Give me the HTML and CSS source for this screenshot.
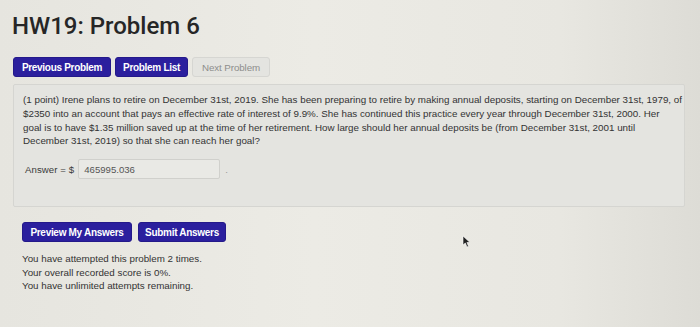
FILE: index.html
```html
<!DOCTYPE html>
<html>
<head>
<meta charset="utf-8">
<link rel="stylesheet" href="styles.css">
</head>
<body>
<div class="page">
  <h1 class="title">HW19: Problem 6</h1>
  <div class="nav">
    <span class="btn">Previous Problem</span>
    <span class="btn">Problem List</span>
    <span class="btn disabled">Next Problem</span>
  </div>
  <div class="problem">
    <p class="text">(1 point) Irene plans to retire on December 31st, 2019. She has been preparing to retire by making annual deposits, starting on December 31st, 1979, of<br>$2350 into an account that pays an effective rate of interest of 9.9%. She has continued this practice every year through December 31st, 2000. Her<br>goal is to have $1.35 million saved up at the time of her retirement. How large should her annual deposits be (from December 31st, 2001 until<br>December 31st, 2019) so that she can reach her goal?</p>
    <div class="answer">
      <span class="label">Answer = $</span>
      <span class="input">465995.036</span>
      <span class="dot">.</span>
    </div>
  </div>
  <div class="submit">
    <div class="actions">
      <span class="btn">Preview My Answers</span>
      <span class="btn">Submit Answers</span>
    </div>
    <div class="status">
      <div>You have attempted this problem 2 times.</div>
      <div>Your overall recorded score is 0%.</div>
      <div>You have unlimited attempts remaining.</div>
    </div>
  </div>
</div>
<svg class="cursor" width="9" height="13" viewBox="0 0 9 13"><path d="M1 1 L1 10 L3.3 8 L5 12 L6.5 11.3 L4.9 7.5 L8 7.5 Z" fill="#222" stroke="#fff" stroke-width="0.6"/></svg>
</body>
</html>
```
FILE: styles.css
```css
html, body {
  margin: 0;
  height: 100%;
}
body {
  background: linear-gradient(90deg, #e6e5df 0%, #ecebe5 45%, #e8e7e1 80%, #dddcd6 100%);
  font-family: "Liberation Sans", Arial, sans-serif;
  color: #333;
  overflow: hidden;
  position: relative;
}
.page {
  padding: 12px 15px 0 13px;
}
.title {
  margin: 0 0 0 -1px;
  font-family: Roboto, "Liberation Sans", sans-serif;
  font-size: 24px;
  line-height: 28px;
  font-weight: 500;
  color: #262626;
}
.nav {
  display: flex;
  gap: 4px;
  margin-top: 17px;
}
.btn {
  display: inline-flex;
  align-items: center;
  justify-content: center;
  height: 20px;
  padding: 0;
  white-space: nowrap;
  box-sizing: border-box;
  background: #2b1f9e;
  color: #fff;
  font-size: 10px;
  font-weight: bold;
  letter-spacing: -0.3px;
  border-radius: 3px;
  border: 1px solid #24198a;
}
.nav .btn:nth-child(1) { width: 98px; }
.nav .btn:nth-child(2) { width: 73px; }
.btn.disabled {
  width: 78px;
  background: #e4e4e0;
  border-color: #d6d6d2;
  color: #8e8e8c;
  font-weight: normal;
  font-size: 9.8px;
  letter-spacing: -0.1px;
}
.problem {
  margin-top: 7px;
  background: #e4e4e0;
  border: 1px solid #d5d5d1;
  border-radius: 2px;
  height: 123px;
  box-sizing: border-box;
  padding: 8px 0 0 9px;
}
.text {
  margin: 0;
  font-size: 9.8px;
  line-height: 13.8px;
  color: #333;
  white-space: nowrap;
}
.answer {
  display: flex;
  align-items: center;
  margin-top: 11px;
  margin-left: 2px;
  font-size: 9.6px;
}
.label {
  color: #3a3a3a;
  letter-spacing: 0.1px;
}
.input {
  margin-left: 4px;
  width: 142px;
  height: 20px;
  box-sizing: border-box;
  border: 1px solid #d0d0cc;
  background: #e9e9e5;
  border-radius: 2px;
  display: flex;
  align-items: center;
  padding-left: 5px;
  font-size: 9.6px;
  color: #555;
}
.dot {
  margin-left: 5px;
  color: #999;
}
.submit {
  padding-left: 9px;
  margin-top: 15px;
}
.actions {
  display: flex;
  gap: 6px;
}
.actions .btn:nth-child(1) { width: 110px; }
.actions .btn:nth-child(2) { width: 88px; }
.status {
  margin-top: 10px;
  font-size: 9.8px;
  line-height: 13.5px;
  color: #333;
}
.cursor {
  position: absolute;
  left: 462px;
  top: 235px;
}
```
